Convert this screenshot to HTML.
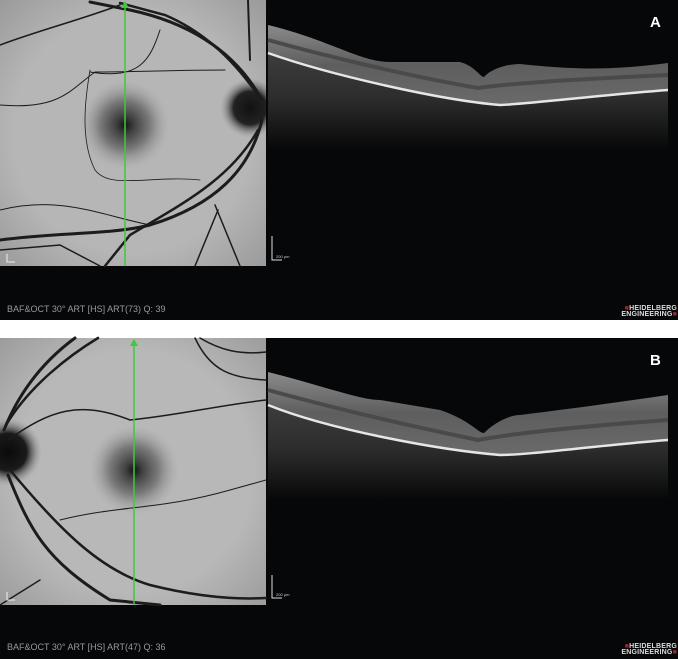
<!DOCTYPE html>
<html><head><meta charset="utf-8"><style>
html,body{margin:0;padding:0;background:#fff;width:678px;height:659px;overflow:hidden}
.p{position:absolute;left:0;width:678px;background:#060708}
.t{position:absolute;left:7px;font:9px "Liberation Sans",sans-serif;color:#9a9a9a}
.lg{position:absolute;right:1px;font:bold 7px/6px "Liberation Sans",sans-serif;color:#ddd;letter-spacing:0.2px;text-align:right}
.lbl{position:absolute;font:bold 15px "Liberation Sans",sans-serif;color:#fff}
</style></head><body>
<div class="p" style="top:0;height:320px"></div>
<div class="p" style="top:338px;height:321px"></div>

<svg width="678" height="659" style="position:absolute;left:0;top:0">
<defs>
<radialGradient id="fa" cx="125" cy="125" r="45" gradientUnits="userSpaceOnUse">
<stop offset="0" stop-color="#141414"/><stop offset="0.2" stop-color="#404040"/><stop offset="0.55" stop-color="#7a7a7a"/><stop offset="1" stop-color="#a9a9a9" stop-opacity="0"/></radialGradient>
<radialGradient id="fb" cx="134" cy="470" r="45" gradientUnits="userSpaceOnUse">
<stop offset="0" stop-color="#141414"/><stop offset="0.2" stop-color="#444"/><stop offset="0.55" stop-color="#7c7c7c"/><stop offset="1" stop-color="#aaa" stop-opacity="0"/></radialGradient>
<radialGradient id="da" cx="250" cy="108" r="30" gradientUnits="userSpaceOnUse">
<stop offset="0" stop-color="#111"/><stop offset="0.55" stop-color="#222"/><stop offset="1" stop-color="#999" stop-opacity="0"/></radialGradient>
<radialGradient id="db" cx="8" cy="452" r="34" gradientUnits="userSpaceOnUse">
<stop offset="0" stop-color="#0a0a0a"/><stop offset="0.55" stop-color="#1a1a1a"/><stop offset="1" stop-color="#999" stop-opacity="0"/></radialGradient>
<radialGradient id="vig" cx="0.5" cy="0.5" r="0.75">
<stop offset="0.6" stop-color="#000" stop-opacity="0"/><stop offset="1" stop-color="#000" stop-opacity="0.18"/></radialGradient>
<linearGradient id="oct" x1="0" y1="0" x2="0" y2="1"><stop offset="0" stop-color="#8a8a8a"/><stop offset="0.5" stop-color="#5e5e5e"/><stop offset="1" stop-color="#6a6a6a"/></linearGradient>
<linearGradient id="chA" x1="0" y1="50" x2="0" y2="150" gradientUnits="userSpaceOnUse"><stop offset="0" stop-color="#3e3e3e"/><stop offset="0.5" stop-color="#2c2c2c"/><stop offset="1" stop-color="#060708"/></linearGradient>
<linearGradient id="chB" x1="0" y1="400" x2="0" y2="500" gradientUnits="userSpaceOnUse"><stop offset="0" stop-color="#3e3e3e"/><stop offset="0.5" stop-color="#2c2c2c"/><stop offset="1" stop-color="#060708"/></linearGradient>
</defs>
<!-- fundus A -->
<rect x="0" y="0" width="266" height="266" fill="#b6b6b6"/>
<rect x="0" y="0" width="266" height="266" fill="url(#fa)"/>
<rect x="200" y="60" width="66" height="100" fill="url(#da)"/>
<rect x="0" y="0" width="266" height="266" fill="url(#vig)"/>
<g fill="none" stroke="#1c1c1c" stroke-linecap="round">
<path d="M262 100 C240 60 200 25 130 10 L90 2" stroke-width="3"/>
<path d="M258 95 C230 55 200 30 165 15 L120 3" stroke-width="2.5"/>
<path d="M250 60 L248 0" stroke-width="2"/>
<path d="M262 120 C250 170 215 205 150 225 C110 235 60 232 0 240" stroke-width="3"/>
<path d="M258 130 C230 180 180 205 130 235 L105 266" stroke-width="2.5"/>
<path d="M215 205 L240 266 M218 210 L195 266" stroke-width="1.5"/>
<path d="M0 45 C40 30 80 20 120 5" stroke-width="1.5"/>
<path d="M225 70 C180 70 130 72 95 72 C70 90 60 110 0 105" stroke-width="1"/>
<path d="M150 225 C100 215 60 195 0 210" stroke-width="1"/>
<path d="M0 250 L60 245 L100 266" stroke-width="1.5"/>
<path d="M160 30 C150 60 140 80 90 72" stroke-width="1"/>
<path d="M90 70 C85 100 80 140 95 170 C110 190 150 175 200 180" stroke-width="0.8"/>
</g>
<!-- fundus B -->
<rect x="0" y="338" width="266" height="267" fill="#b8b8b8"/>
<rect x="0" y="338" width="266" height="267" fill="url(#fb)"/>
<rect x="0" y="410" width="45" height="90" fill="url(#db)"/>
<rect x="0" y="338" width="266" height="267" fill="url(#vig)"/>
<g fill="none" stroke="#1c1c1c" stroke-linecap="round">
<path d="M4 430 C20 390 45 360 75 338" stroke-width="3"/>
<path d="M6 425 C30 385 70 355 98 338" stroke-width="2.5"/>
<path d="M8 440 C50 410 80 400 130 420 C180 415 220 405 266 400" stroke-width="1.5"/>
<path d="M8 475 C30 530 45 560 110 600 L160 605" stroke-width="3"/>
<path d="M10 470 C60 530 100 570 150 585 C190 595 230 600 266 598" stroke-width="2.5"/>
<path d="M195 338 C210 370 230 378 266 380" stroke-width="1.5"/>
<path d="M200 338 C220 350 240 355 266 352" stroke-width="1.5"/>
<path d="M60 520 C120 505 160 510 230 490 L266 480" stroke-width="1"/>
<path d="M40 580 L0 605" stroke-width="1.5"/>
</g>
<line x1="125" y1="4" x2="125" y2="266" stroke="#3fc93a" stroke-width="1.5"/>
<path d="M121 8 L125 1 L129 8Z" fill="#3fc93a"/>
<line x1="134" y1="342" x2="134" y2="605" stroke="#3fc93a" stroke-width="1.5"/>
<path d="M130 346 L134 339 L138 346Z" fill="#3fc93a"/>
<!-- OCT A -->
<path d="M268 53 C330 75 440 100 500 105 C530 104 600 95 668 90 L668 160 L268 160 Z" fill="url(#chA)"/>
<path d="M268 25 C330 40 360 62 390 62 L460 62 C475 66 480 77 484 77 C490 70 505 64 520 64 C560 68 600 72 668 63 L668 90 C600 95 530 104 500 105 C440 100 330 75 268 53 Z" fill="url(#oct)"/>
<path d="M268 53 C330 75 440 100 500 105 C530 104 600 95 668 90" fill="none" stroke="#e6e6e6" stroke-width="2.5"/>
<path d="M268 40 C340 60 420 78 478 88 C520 82 600 78 668 75" fill="none" stroke="#4a4a4a" stroke-width="4"/>
<!-- OCT B -->
<path d="M268 405 C330 430 440 450 500 455 C530 455 600 445 668 440 L668 505 L268 505 Z" fill="url(#chB)"/>
<path d="M268 372 C320 385 360 400 380 400 L440 410 C470 420 478 433 484 433 C495 422 510 415 520 415 C560 410 600 405 668 395 L668 440 C600 445 530 455 500 455 C440 450 330 430 268 405 Z" fill="url(#oct)"/>
<path d="M268 405 C330 430 440 450 500 455 C530 455 600 445 668 440" fill="none" stroke="#e6e6e6" stroke-width="2.5"/>
<path d="M268 390 C340 410 420 428 478 440 C520 432 600 425 668 420" fill="none" stroke="#4a4a4a" stroke-width="4"/>
<!-- scale bars -->
<path d="M272 236 L272 260 L282 260" fill="none" stroke="#ddd" stroke-width="1"/>
<path d="M272 575 L272 598 L282 598" fill="none" stroke="#ddd" stroke-width="1"/>
<path d="M7 254 L7 262 L15 262" fill="none" stroke="#eee" stroke-width="1"/>
<path d="M7 592 L7 600 L15 600" fill="none" stroke="#eee" stroke-width="1"/>
<text x="276" y="258" font-family="Liberation Sans" font-size="4" fill="#ccc">200 μm</text>
<text x="276" y="596" font-family="Liberation Sans" font-size="4" fill="#ccc">200 μm</text>
</svg>
<div class="lbl" style="left:650px;top:14px">A</div>
<div class="lbl" style="left:650px;top:352px">B</div>
<div class="t" style="top:304px">BAF&amp;OCT 30° ART [HS] ART(73) Q: 39</div>
<div class="t" style="top:642px">BAF&amp;OCT 30° ART [HS] ART(47) Q: 36</div>
<div class="lg" style="top:306px"><span style="color:#a02030">■</span>HEIDELBERG<br>ENGINEERING<span style="color:#a02030">■</span></div>
<div class="lg" style="top:644px"><span style="color:#a02030">■</span>HEIDELBERG<br>ENGINEERING<span style="color:#a02030">■</span></div>
</body></html>
